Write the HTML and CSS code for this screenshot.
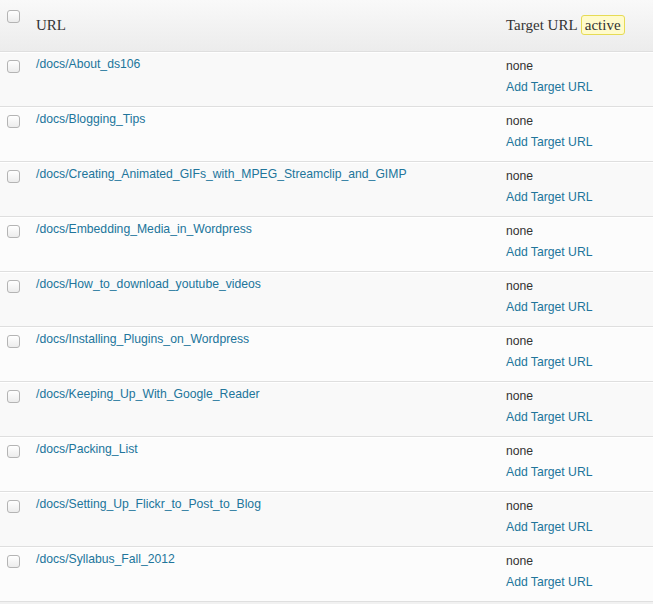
FILE: index.html
```html
<!DOCTYPE html>
<html lang="en">
<head>
  <meta charset="UTF-8" />
  <title>Redirects</title>
  <link rel="stylesheet" href="styles.css">
</head>
<body>
  <div class="list">
    <div class="row head">
      <div class="cb"><input type="checkbox"></div>
      <div class="col-url">URL</div>
      <div class="col-target">Target URL <span class="badge">active</span></div>
    </div>

    <div class="row alt">
      <div class="cb"><input type="checkbox"></div>
      <div class="col-url"><a href="#">/docs/About_ds106</a></div>
      <div class="col-target">none<br><a href="#">Add Target URL</a></div>
    </div>
    <div class="row">
      <div class="cb"><input type="checkbox"></div>
      <div class="col-url"><a href="#">/docs/Blogging_Tips</a></div>
      <div class="col-target">none<br><a href="#">Add Target URL</a></div>
    </div>
    <div class="row alt">
      <div class="cb"><input type="checkbox"></div>
      <div class="col-url"><a href="#">/docs/Creating_Animated_GIFs_with_MPEG_Streamclip_and_GIMP</a></div>
      <div class="col-target">none<br><a href="#">Add Target URL</a></div>
    </div>
    <div class="row">
      <div class="cb"><input type="checkbox"></div>
      <div class="col-url"><a href="#">/docs/Embedding_Media_in_Wordpress</a></div>
      <div class="col-target">none<br><a href="#">Add Target URL</a></div>
    </div>
    <div class="row alt">
      <div class="cb"><input type="checkbox"></div>
      <div class="col-url"><a href="#">/docs/How_to_download_youtube_videos</a></div>
      <div class="col-target">none<br><a href="#">Add Target URL</a></div>
    </div>
    <div class="row">
      <div class="cb"><input type="checkbox"></div>
      <div class="col-url"><a href="#">/docs/Installing_Plugins_on_Wordpress</a></div>
      <div class="col-target">none<br><a href="#">Add Target URL</a></div>
    </div>
    <div class="row alt">
      <div class="cb"><input type="checkbox"></div>
      <div class="col-url"><a href="#">/docs/Keeping_Up_With_Google_Reader</a></div>
      <div class="col-target">none<br><a href="#">Add Target URL</a></div>
    </div>
    <div class="row">
      <div class="cb"><input type="checkbox"></div>
      <div class="col-url"><a href="#">/docs/Packing_List</a></div>
      <div class="col-target">none<br><a href="#">Add Target URL</a></div>
    </div>
    <div class="row alt">
      <div class="cb"><input type="checkbox"></div>
      <div class="col-url"><a href="#">/docs/Setting_Up_Flickr_to_Post_to_Blog</a></div>
      <div class="col-target">none<br><a href="#">Add Target URL</a></div>
    </div>
    <div class="row">
      <div class="cb"><input type="checkbox"></div>
      <div class="col-url"><a href="#">/docs/Syllabus_Fall_2012</a></div>
      <div class="col-target">none<br><a href="#">Add Target URL</a></div>
    </div>
  </div>
</body>
</html>
```

FILE: styles.css
```css
body {
  margin: 0;
  background: #f1f1f1;
  font-family: "Liberation Sans", Arial, sans-serif;
  font-size: 12.2px;
  color: #333;
}
.list {
  background: #fcfcfc;
}
.row {
  display: grid;
  grid-template-columns: 36px 470px 1fr;
  border-bottom: 1px solid #dfdfdf;
  border-top: 1px solid #fff;
  box-sizing: border-box;
  height: 55px;
}
.row.alt {
  background: #f9f9f9;
}
.row .col-url {
  padding-top: 1px;
  line-height: 21px;
}
.row .col-target {
  padding-top: 3px;
  line-height: 21px;
}
.cb {
  padding: 7px 0 0 7px;
}
.cb input {
  appearance: none;
  -webkit-appearance: none;
  margin: 0;
  width: 13px;
  height: 13px;
  border: 1px solid #b4b4b4;
  border-radius: 3px;
  background: linear-gradient(#fff, #ececec);
  box-sizing: border-box;
  display: block;
}
a {
  color: #21759b;
  text-decoration: none;
}
.row.head {
  height: 52px;
  border-top: none;
  background: linear-gradient(#f9f9f9, #ececec);
  font-family: "Liberation Serif", Georgia, serif;
  font-size: 15px;
  color: #333;
}
.head .cb {
  padding-top: 10px;
}
.head .col-url, .head .col-target {
  padding-top: 15px;
  line-height: 20px;
}
.badge {
  display: inline-block;
  background: #fffbcc;
  border: 1px solid #e6db55;
  border-radius: 3px;
  padding: 0 3px;
  line-height: 18px;
}
```
